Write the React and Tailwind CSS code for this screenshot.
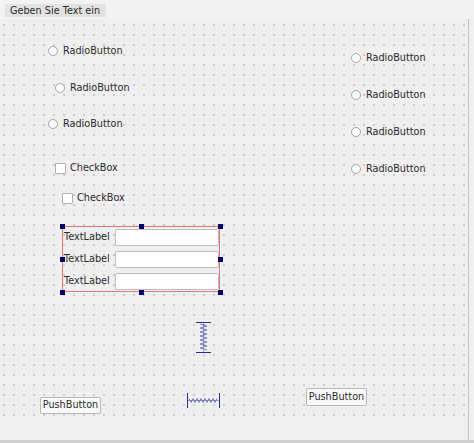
const font = { fontFamily: '"DejaVu Sans", "Liberation Sans", sans-serif' };

function Radio({ className = "" }) {
  return (
    <div className={`flex h-[14px] items-center gap-[5px] ${className}`}>
      <span className="h-[10px] w-[10px] rounded-full border border-[#a8a8a8] bg-[#fbfbfb]" />
      <span>RadioButton</span>
    </div>
  );
}

function Check({ className = "" }) {
  return (
    <div className={`flex h-[14px] items-center gap-[4px] ${className}`}>
      <span className="h-[11px] w-[11px] rounded-[1px] border border-[#b0b0b0] bg-white" />
      <span>CheckBox</span>
    </div>
  );
}

function Handle({ className }) {
  return <span className={`absolute h-[5px] w-[5px] bg-[#00006b] ${className}`} />;
}

function VSpring() {
  const pts = [];
  for (let y = 3; y <= 30; y += 2) pts.push(`${(y - 3) % 4 ? 12 : 5},${y}`);
  return (
    <svg width="17" height="33" className="absolute left-[195px] top-[302px]">
      <line x1="1" y1="1.5" x2="16" y2="1.5" stroke="#2a2a96" strokeWidth="1" />
      <line x1="1" y1="31.5" x2="16" y2="31.5" stroke="#2a2a96" strokeWidth="1" />
      <line x1="8.5" y1="2" x2="8.5" y2="31" stroke="#2a2a96" strokeWidth="0.4" />
      <polyline points={pts.join(" ")} fill="none" stroke="#3a3aa0" strokeWidth="0.6" />
    </svg>
  );
}

function HSpring() {
  const pts = [];
  for (let x = 3; x <= 32; x += 2) pts.push(`${x},${(x - 3) % 4 ? 10.5 : 6.5}`);
  return (
    <svg width="35" height="17" className="absolute left-[186px] top-[373px]">
      <line x1="1.5" y1="1" x2="1.5" y2="16" stroke="#2a2a96" strokeWidth="1" />
      <line x1="33.5" y1="1" x2="33.5" y2="16" stroke="#2a2a96" strokeWidth="1" />
      <line x1="2" y1="8.5" x2="33" y2="8.5" stroke="#2a2a96" strokeWidth="0.4" />
      <polyline points={pts.join(" ")} fill="none" stroke="#3a3aa0" strokeWidth="0.6" />
    </svg>
  );
}

function LabelRow() {
  return (
    <div className="flex h-[17px] items-center">
      <span className="w-[52px] pl-[1px]">TextLabel</span>
      <span className="h-[17px] w-[104px] rounded-[2px] border border-[#bdbdbd] bg-white" />
    </div>
  );
}

export default function App() {
  return (
    <div style={font} className="flex h-[443px] w-[474px] flex-col overflow-hidden bg-[#efefef] text-[9.7px] text-[#2c2c2c]">
      <div className="h-[19px] shrink-0 bg-[#f2f2f2] pl-[5px] pt-[4px]">
        <span className="block h-[13px] w-[101px] bg-[#e2e2e2] pl-[5px] leading-[13px]">Geben Sie Text ein</span>
      </div>

      <div className="relative h-[421px] w-[469px] shrink-0 border-r border-[#c4c4c4]">
        <div className="h-[397px] bg-[image:radial-gradient(circle_at_1px_1px,#cbcbcb_0.9px,transparent_1px)] bg-[size:10px_10px] bg-[position:3px_5px]" />

        <Radio className="absolute left-[48px] top-[25px]" />
        <Radio className="absolute left-[55px] top-[62px]" />
        <Radio className="absolute left-[48px] top-[98px]" />

        <div className="absolute left-[351px] top-[32px] flex flex-col gap-[23px]">
          <Radio />
          <Radio />
          <Radio />
          <Radio />
        </div>

        <Check className="absolute left-[55px] top-[142px]" />
        <Check className="absolute left-[62px] top-[172px]" />

        <div className="absolute left-[62px] top-[207px] flex h-[66px] w-[158px] flex-col gap-[5px] border border-[#e07878] pt-[2px]">
          <LabelRow />
          <LabelRow />
          <LabelRow />
        </div>
        <Handle className="left-[60px] top-[205px]" />
        <Handle className="left-[139px] top-[205px]" />
        <Handle className="left-[218px] top-[205px]" />
        <Handle className="left-[60px] top-[238px]" />
        <Handle className="left-[218px] top-[238px]" />
        <Handle className="left-[60px] top-[271px]" />
        <Handle className="left-[139px] top-[271px]" />
        <Handle className="left-[218px] top-[271px]" />

        <VSpring />
        <HSpring />

        <button className="absolute left-[40px] top-[378px] flex h-[17px] w-[61px] items-center justify-center rounded-[2px] border border-[#b8b8b8] bg-[#f8f8f8]">
          PushButton
        </button>
        <button className="absolute left-[306px] top-[369px] flex h-[18px] w-[61px] items-center justify-center rounded-[2px] border border-[#b8b8b8] bg-[#f8f8f8]">
          PushButton
        </button>
      </div>

      <div className="h-[3px] shrink-0 bg-[#cfcfcf]" />
    </div>
  );
}
